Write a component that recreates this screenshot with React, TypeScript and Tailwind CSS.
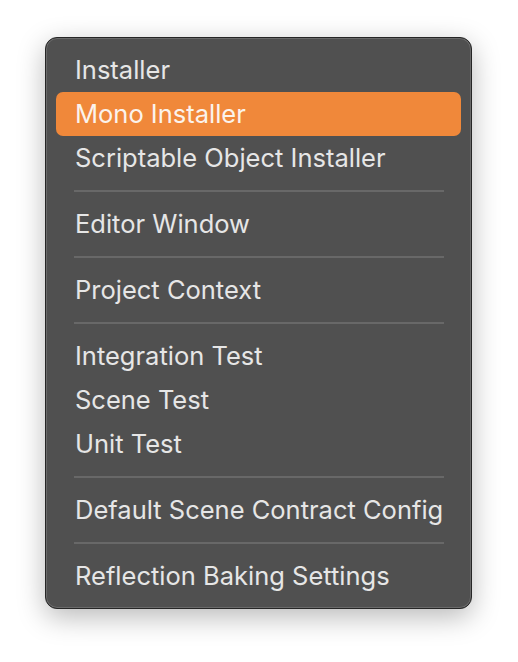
import React from 'react'

type Entry = { label: string; active?: boolean } | 'sep'

const entries: Entry[] = [
  { label: 'Installer' },
  { label: 'Mono Installer', active: true },
  { label: 'Scriptable Object Installer' },
  'sep',
  { label: 'Editor Window' },
  'sep',
  { label: 'Project Context' },
  'sep',
  { label: 'Integration Test' },
  { label: 'Scene Test' },
  { label: 'Unit Test' },
  'sep',
  { label: 'Default Scene Contract Config' },
  'sep',
  { label: 'Reflection Baking Settings' },
]

export default function App() {
  return (
    <div className="min-h-[662px] w-[518px] bg-white pt-[37px] pl-[45px]" style={{ fontFamily: 'Inter, "Noto Sans", sans-serif' }}>
      <div className="w-[427px] rounded-[12px] border border-[#262626] bg-[#505050] px-[10px] py-[10px] shadow-[inset_0_0_0_1px_#6a6a6a,0_8px_28px_rgba(0,0,0,0.28)]">
        {entries.map((e, i) =>
          e === 'sep' ? (
            <div key={i} className="flex h-[22px] items-center">
              <div className="ml-[18px] h-[2px] w-[370px] bg-[#686868]" />
            </div>
          ) : (
            <div
              key={i}
              className={
                e.active
                  ? 'flex h-[44px] items-center rounded-[7px] bg-[#f0883a] pt-[1px] pl-[19px] text-[25.5px] text-[#fbf3ec]'
                  : 'flex h-[44px] items-center pt-[1px] pl-[19px] text-[25.5px] text-[#e6e6e6]'
              }
            >
              {e.label}
            </div>
          )
        )}
      </div>
    </div>
  )
}
